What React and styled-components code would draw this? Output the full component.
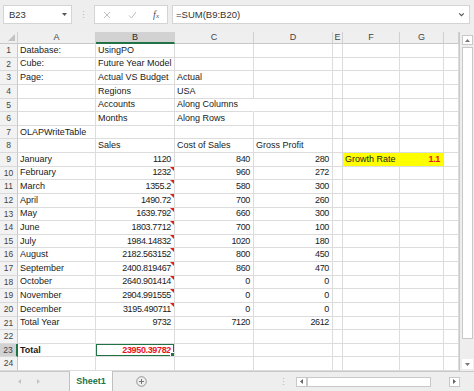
import React from "react";
import styled, { createGlobalStyle } from "styled-components";

const Global = createGlobalStyle`
  html, body { margin: 0; padding: 0; background: #f0f0f0; }
  body { font-family: "Liberation Sans", Arial, sans-serif; overflow: hidden; }
  * { box-sizing: border-box; }
`;

const Window = styled.div`
  width: 474px;
  height: 391px;
  display: flex;
  flex-direction: column;
  background: #eeeeee;
  overflow: hidden;
`;

const Toolbar = styled.div`
  height: 32px;
  display: flex;
  align-items: flex-start;
  padding: 5px 4px 0 3px;
  background: #eeeeee;
`;

const Box = styled.div`
  height: 19px;
  background: #ffffff;
  border: 1px solid #d4d4d4;
  display: flex;
  align-items: center;
  font-size: 9.5px;
  color: #333;
`;

const NameBox = styled(Box)`
  width: 69px;
  padding: 0 4px 0 5px;
  justify-content: space-between;
`;

const Grip = styled.div`
  width: 22px;
  height: 19px;
  display: flex;
  align-items: center;
  justify-content: center;
  color: #b5b5b5;
  font-size: 9px;
`;

const FxBox = styled(Box)`
  width: 74px;
  padding: 0 8px;
  justify-content: space-between;
`;

const FormulaBox = styled(Box)`
  flex: 1;
  margin-left: 4px;
  padding: 0 4px 0 3px;
  justify-content: space-between;
`;

const FxText = styled.span`
  font-family: "Liberation Serif", serif;
  font-style: italic;
  font-size: 10px;
  color: #555;
  & small { font-size: 7px; }
`;

const Main = styled.div`
  display: flex;
  height: 339px;
`;

const Sheet = styled.div`
  width: 459px;
  display: grid;
  grid-template-columns: 18px 78px 79px 79px 79px 10px 57px 44px 15px;
  grid-template-rows: 12px repeat(24, 13.625px);
  background: #ffffff;
`;

const ColHead = styled.div`
  background: ${(p) => (p.$sel ? "#d2d2d2" : "#efefef")};
  border-right: 1px solid #d0d0d0;
  border-bottom: ${(p) => (p.$sel ? "2px solid #217346" : "1px solid #c8c8c8")};
  font-size: 9px;
  color: ${(p) => (p.$sel ? "#2a2a2a" : "#444")};
  display: flex;
  align-items: center;
  justify-content: center;
  line-height: 1;
  position: relative;
`;

const Corner = styled(ColHead)`
  &::after {
    content: "";
    position: absolute;
    right: 2px;
    bottom: 2px;
    border-left: 7px solid transparent;
    border-bottom: 7px solid #c2c2c2;
  }
`;

const RowHead = styled.div`
  background: ${(p) => (p.$sel ? "#d2d2d2" : "#f2f2f2")};
  border-right: ${(p) => (p.$sel ? "2px solid #217346" : "1px solid #c8c8c8")};
  border-bottom: 1px solid #dadada;
  font-size: 8.5px;
  color: #444;
  display: flex;
  align-items: center;
  justify-content: center;
  line-height: 1;
`;

const Cell = styled.div`
  position: relative;
  border-right: ${(p) => (p.$noRight ? "1px solid transparent" : "1px solid #dcdcdc")};
  border-bottom: 1px solid #dcdcdc;
  background: ${(p) => p.$bg || "transparent"};
  font-size: 9px;
  font-weight: ${(p) => (p.$bold ? 700 : 400)};
  color: ${(p) => p.$color || "#1a1a1a"};
  display: flex;
  align-items: center;
  justify-content: ${(p) => (p.$num ? "flex-end" : "flex-start")};
  padding: 0 ${(p) => (p.$num ? "3px" : "0")} 0 ${(p) => (p.$num ? "0" : "2px")};
  letter-spacing: ${(p) => (p.$num ? "-0.35px" : "0")};
  white-space: nowrap;
  overflow: ${(p) => (p.$over ? "visible" : "hidden")};
  z-index: ${(p) => (p.$over ? 1 : 0)};
  line-height: 1;
`;

const Tri = styled.span`
  position: absolute;
  top: 0;
  right: 0;
  border-left: 4px solid transparent;
  border-top: 4px solid #e0201b;
`;

const Selection = styled.span`
  position: absolute;
  left: -1px;
  top: -1px;
  right: -1px;
  bottom: -1px;
  border: 2px solid #217346;
  pointer-events: none;
  &::after {
    content: "";
    position: absolute;
    right: -4px;
    bottom: -4px;
    width: 5px;
    height: 5px;
    background: #217346;
    border: 1px solid #fff;
  }
`;

const VScroll = styled.div`
  width: 15px;
  background: #eeeeee;
  border-left: 1px solid #c8c8c8;
  display: flex;
  flex-direction: column;
  align-items: center;
  padding: 3px 0 2px;
  gap: 2px;
`;

const ArrowBtn = styled.div`
  width: 11px;
  height: 10px;
  background: #ffffff;
  border: 1px solid ${(p) => (p.$plain ? "transparent" : "#c8c8c8")};
  display: flex;
  align-items: center;
  justify-content: center;
  flex-shrink: 0;
`;

const VThumb = styled.div`
  width: 11px;
  flex: 1;
  background: #ffffff;
  border: 1px solid #c8c8c8;
  margin-bottom: 18px;
`;

const VTrack = styled.div`
  flex: 1;
  display: flex;
  flex-direction: column;
  align-items: center;
  width: 100%;
`;

const TabBar = styled.div`
  height: 20px;
  display: flex;
  align-items: stretch;
  background: #eeeeee;
  border-top: 1px solid #c8c8c8;
`;

const NavArrows = styled.div`
  width: 69px;
  display: flex;
  align-items: center;
  padding-left: 17px;
  gap: 14px;
`;

const Tab = styled.div`
  width: 44px;
  margin-top: -1px;
  background: #ffffff;
  border-left: 1px solid #c0c0c0;
  border-right: 1px solid #c0c0c0;
  color: #217346;
  font-weight: 700;
  font-size: 9px;
  display: flex;
  align-items: center;
  justify-content: center;
`;

const AddSheet = styled.div`
  width: 56px;
  display: flex;
  align-items: center;
  justify-content: center;
`;

const TabSpacer = styled.div`
  flex: 1;
  display: flex;
  align-items: center;
  justify-content: flex-end;
  padding-right: 8px;
  color: #b5b5b5;
  font-size: 9px;
`;

const HScroll = styled.div`
  width: 178px;
  display: flex;
  align-items: center;
  padding: 0 14px 0 0;
`;

const HThumb = styled.div`
  width: 124px;
  height: 10px;
  background: #ffffff;
  border: 1px solid #c8c8c8;
  margin-right: auto;
`;

const cols = ["A", "B", "C", "D", "E", "F", "G", "H"];

const months = [
  ["January", "1120", "840", "280", false],
  ["February", "1232", "960", "272", true],
  ["March", "1355.2", "580", "300", true],
  ["April", "1490.72", "700", "260", true],
  ["May", "1639.792", "660", "300", true],
  ["June", "1803.7712", "700", "100", true],
  ["July", "1984.14832", "1020", "180", true],
  ["August", "2182.563152", "800", "450", true],
  ["September", "2400.819467", "860", "470", true],
  ["October", "2640.901414", "0", "0", true],
  ["November", "2904.991555", "0", "0", true],
  ["December", "3195.490711", "0", "0", true],
];

const rows = [
  { A: { t: "Database:" }, B: { t: "UsingPO" } },
  { A: { t: "Cube:" }, B: { t: "Future Year Model" } },
  { A: { t: "Page:" }, B: { t: "Actual VS Budget" }, C: { t: "Actual" } },
  { B: { t: "Regions" }, C: { t: "USA" } },
  { B: { t: "Accounts" }, C: { t: "Along Columns", over: true } },
  { B: { t: "Months" }, C: { t: "Along Rows" } },
  { A: { t: "OLAPWriteTable" } },
  { B: { t: "Sales" }, C: { t: "Cost of Sales" }, D: { t: "Gross Profit" } },
  ...months.map(([m, b, c, d, tri], i) => {
    const r = {
      A: { t: m },
      B: { t: b, num: true, tri },
      C: { t: c, num: true },
      D: { t: d, num: true },
    };
    if (i === 0) {
      r.F = { t: "Growth Rate", bg: "#ffff00", noRight: true };
      r.G = { t: "1.1", num: true, bold: true, color: "#e8141b", bg: "#ffff00" };
    }
    return r;
  }),
  {
    A: { t: "Total Year" },
    B: { t: "9732", num: true },
    C: { t: "7120", num: true },
    D: { t: "2612", num: true },
  },
  {},
  {
    A: { t: "Total", bold: true },
    B: { t: "23950.39782", num: true, bold: true, color: "#e8141b", sel: true },
  },
  {},
];

const Chevron = ({ size = 6, color = "#666" }) => (
  <svg width={size} height={size} viewBox="0 0 6 6">
    <path d="M1 2 L3 4 L5 2" fill="none" stroke={color} strokeWidth="1" />
  </svg>
);

const TriIcon = ({ dir, color = "#666", size = 5 }) => {
  const pts = {
    down: "0,1 5,1 2.5,4",
    up: "0,4 5,4 2.5,1",
    left: "4,0 4,5 1,2.5",
    right: "1,0 1,5 4,2.5",
  };
  return (
    <svg width={size} height={size} viewBox="0 0 5 5">
      <polygon points={pts[dir]} fill={color} />
    </svg>
  );
};

export default function App() {
  return (
    <>
      <Global />
      <Window>
        <Toolbar>
          <NameBox>
            <span>B23</span>
            <TriIcon dir="down" color="#555" />
          </NameBox>
          <Grip>⋮</Grip>
          <FxBox>
            <svg width="8" height="8" viewBox="0 0 8 8">
              <path d="M1 1 L7 7 M7 1 L1 7" stroke="#b8b8b8" strokeWidth="0.9" />
            </svg>
            <svg width="9" height="8" viewBox="0 0 9 8">
              <path d="M1 4.5 L3.5 7 L8 1" fill="none" stroke="#b8b8b8" strokeWidth="0.9" />
            </svg>
            <FxText>
              f<small>x</small>
            </FxText>
          </FxBox>
          <FormulaBox>
            <span>=SUM(B9:B20)</span>
            <Chevron size={7} color="#555" />
          </FormulaBox>
        </Toolbar>
        <Main>
          <Sheet>
            <Corner />
            {cols.map((c) => (
              <ColHead key={c} $sel={c === "B"}>
                {c === "H" ? "" : c}
              </ColHead>
            ))}
            {rows.map((r, ri) => (
              <React.Fragment key={ri}>
                <RowHead $sel={ri === 22}>{ri + 1}</RowHead>
                {cols.map((c) => {
                  const d = r[c] || {};
                  return (
                    <Cell
                      key={c}
                      $num={d.num}
                      $bold={d.bold}
                      $color={d.color}
                      $bg={d.bg}
                      $over={d.over}
                      $noRight={d.noRight || d.over}
                    >
                      {d.t}
                      {d.tri && <Tri />}
                      {d.sel && <Selection />}
                    </Cell>
                  );
                })}
              </React.Fragment>
            ))}
          </Sheet>
          <VScroll>
            <ArrowBtn>
              <TriIcon dir="up" size={5} color="#777" />
            </ArrowBtn>
            <VTrack>
              <VThumb />
            </VTrack>
            <ArrowBtn $plain>
              <TriIcon dir="down" size={5} color="#777" />
            </ArrowBtn>
          </VScroll>
        </Main>
        <TabBar>
          <NavArrows>
            <TriIcon dir="left" color="#c4c4c4" />
            <TriIcon dir="right" color="#c4c4c4" />
          </NavArrows>
          <Tab>Sheet1</Tab>
          <AddSheet>
            <svg width="11" height="11" viewBox="0 0 11 11">
              <circle cx="5.5" cy="5.5" r="4.8" fill="none" stroke="#8a8a8a" strokeWidth="0.9" />
              <path d="M5.5 3 V8 M3 5.5 H8" stroke="#777" strokeWidth="1" />
            </svg>
          </AddSheet>
          <TabSpacer>⋮</TabSpacer>
          <HScroll>
            <ArrowBtn>
              <TriIcon dir="left" size={5} color="#666" />
            </ArrowBtn>
            <HThumb />
            <ArrowBtn>
              <TriIcon dir="right" size={5} color="#666" />
            </ArrowBtn>
          </HScroll>
        </TabBar>
      </Window>
    </>
  );
}
